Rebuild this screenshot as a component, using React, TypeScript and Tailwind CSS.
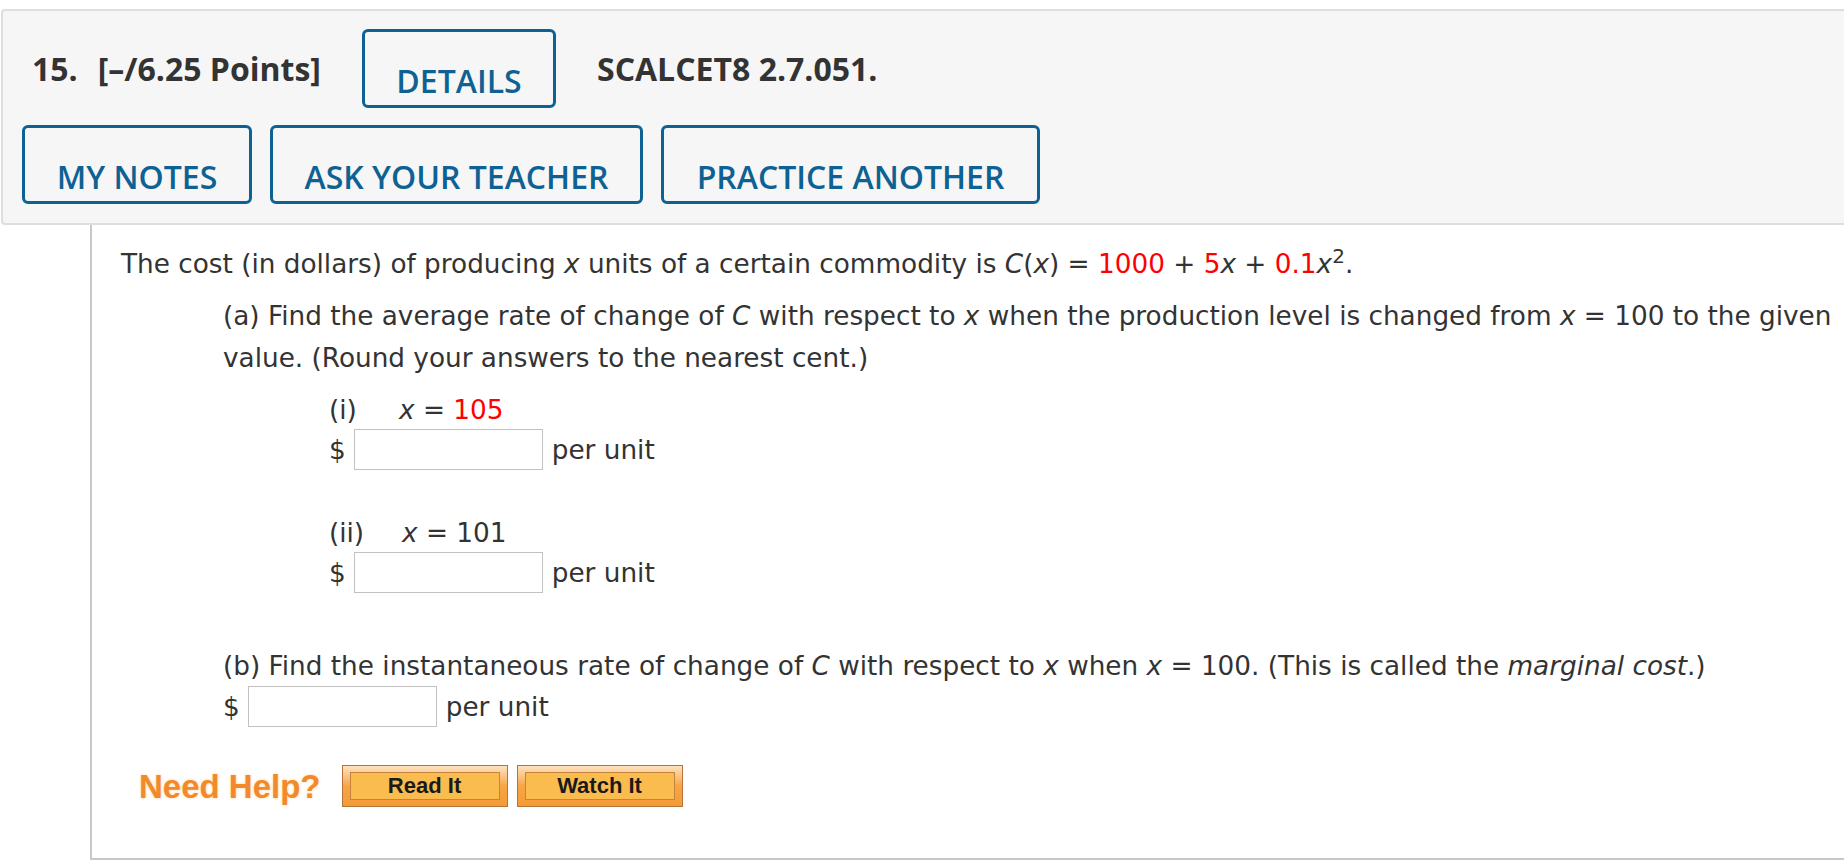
import React from 'react';

const blue = 'text-[#0e6293] border-[#0e6293]';

function HeadButton({ label, width }: { label: string; width: string }) {
    return (
        <div
            className={`${width} ${blue} flex h-[79px] shrink-0 items-end justify-center rounded-[6px] border-[3px] pb-[8px] text-[32px] font-semibold leading-none`}
        >
            {label}
        </div>
    );
}

function HelpButton({ label }: { label: string }) {
    return (
        <div className="h-[42px] w-[166px] border border-[#b4743a] bg-gradient-to-b from-[#fde2bd] via-[#f7a544] to-[#f49b36] px-[7px] py-[6px]">
            <div className="flex h-full w-full items-center justify-center border border-[#c4843e] bg-[#fbbc4f] font-['Liberation_Sans',Arial,sans-serif] text-[22px] font-bold leading-none text-[#1a1a1a]">
                {label}
            </div>
        </div>
    );
}

function Answer({ className = '' }: { className?: string }) {
    return (
        <div className={`flex items-center ${className}`}>
            <span className="mr-[8px] leading-[30px]">$</span>
            <div className="h-[41px] w-[189px] border border-[#c2c2c2] bg-white" />
            <span className="ml-[9px] leading-[30px]">per unit</span>
        </div>
    );
}

const Red = ({ children }: { children: React.ReactNode }) => <span className="text-[#ff0000]">{children}</span>;
const I = ({ children }: { children: React.ReactNode }) => <i>{children}</i>;

export default function App() {
    return (
        <div className="flex h-[860px] w-[1844px] flex-col overflow-hidden bg-white">
            {/* Question header */}
            <div className="ml-[1px] mt-[9px] rounded-l-[4px] border-y-2 border-l-2 border-[#dedede] bg-[#f6f6f6] pb-[19px] pl-[19px] pt-[18px] font-['Open_Sans',sans-serif]">
                <div className="flex h-[79px] items-center">
                    <div className="w-[340px] shrink-0 pl-[10px] text-[32px] font-bold text-[#333]">
                        15.<span className="ml-[20px]">[–/6.25 Points]</span>
                    </div>
                    <HeadButton label="DETAILS" width="w-[194px]" />
                    <span className="ml-[41px] text-[32px] font-bold text-[#333]">SCALCET8 2.7.051.</span>
                </div>
                <div className="mt-[17px] flex gap-[18px]">
                    <HeadButton label="MY NOTES" width="w-[230px]" />
                    <HeadButton label="ASK YOUR TEACHER" width="w-[373px]" />
                    <HeadButton label="PRACTICE ANOTHER" width="w-[379px]" />
                </div>
            </div>

            {/* Question body */}
            <div className="ml-[90px] flex-1 border-b-2 border-l-2 border-[#c8c8c8] pl-[29px] pt-[24px] font-['DejaVu_Sans',Verdana,sans-serif] text-[26.3px] text-[#333]">
                <p className="leading-[30px]">
                    The cost (in dollars) of producing <I>x</I> units of a certain commodity is <I>C</I>(<I>x</I>) ={' '}
                    <Red>1000</Red> + <Red>5</Red>
                    <I>x</I> + <Red>0.1</Red>
                    <I>x</I>
                    <sup className="text-[20px]">2</sup>.
                </p>

                <div className="ml-[102px]">
                    <p className="mt-[16px] leading-[42px]">
                        (a) Find the average rate of change of <I>C</I> with respect to <I>x</I> when the production level is
                        changed from <I>x</I> = 100 to the given value. (Round your answers to the nearest cent.)
                    </p>

                    <div className="ml-[106px]">
                        <div className="mt-[16px] flex leading-[30px]">
                            <span className="w-[70px]">(i)</span>
                            <span>
                                <I>x</I> = <Red>105</Red>
                            </span>
                        </div>
                        <Answer className="mt-[4px]" />

                        <div className="mt-[48px] flex leading-[30px]">
                            <span className="w-[73px]">(ii)</span>
                            <span>
                                <I>x</I> = 101
                            </span>
                        </div>
                        <Answer className="mt-[4px]" />
                    </div>

                    <p className="mt-[58px] leading-[30px]">
                        (b) Find the instantaneous rate of change of <I>C</I> with respect to <I>x</I> when <I>x</I> = 100.
                        (This is called the <I>marginal cost</I>.)
                    </p>
                    <Answer className="mt-[5px]" />
                </div>

                <div className="ml-[18px] mt-[38px] flex items-center">
                    <span className="mr-[21px] font-['Liberation_Sans',Arial,sans-serif] text-[33px] font-bold leading-none text-[#f28a2b] [text-shadow:0_0_3px_rgba(255,200,140,0.8)]">
                        Need Help?
                    </span>
                    <HelpButton label="Read It" />
                    <div className="w-[9px]" />
                    <HelpButton label="Watch It" />
                </div>
            </div>
        </div>
    );
}
